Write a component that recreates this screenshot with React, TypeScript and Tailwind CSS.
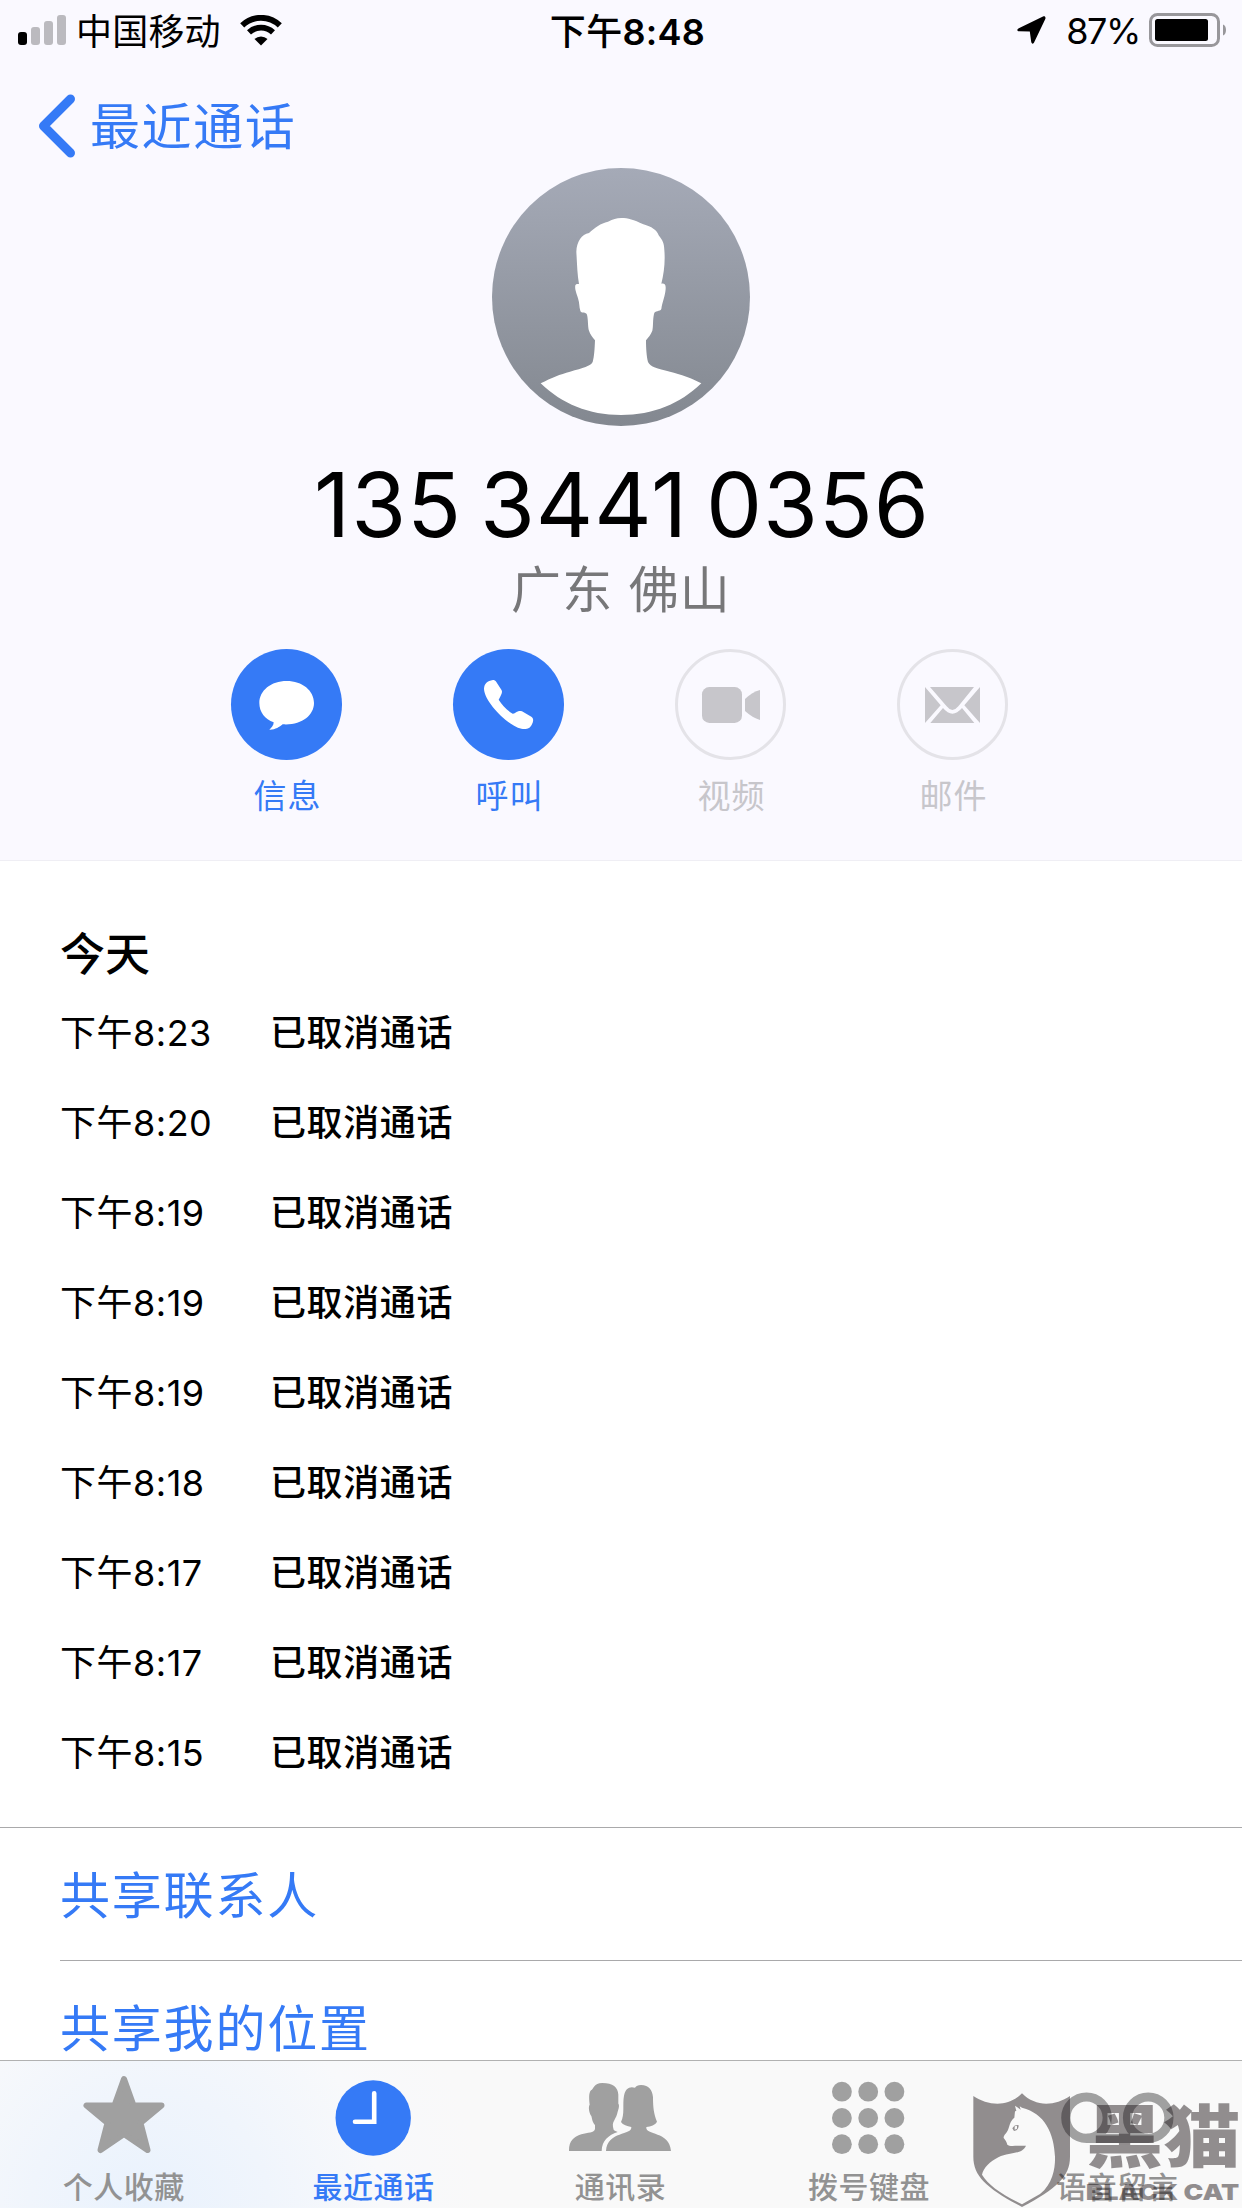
import type { ReactNode } from 'react';

const calls = ['8:23', '8:20', '8:19', '8:19', '8:19', '8:18', '8:17', '8:17', '8:15'];

function StatusBar() {
  return (
    <div className="flex h-[60px] items-center text-[36px] leading-[60px] text-black">
      <div className="flex flex-1 items-center pl-[18px]">
        <svg width="48" height="30" viewBox="0 0 48 30">
          <rect x="0" y="17" width="9" height="13" rx="3" fill="#000" />
          <rect x="13" y="12" width="9" height="18" rx="3" fill="#bbbabf" />
          <rect x="26" y="6" width="9" height="24" rx="3" fill="#bbbabf" />
          <rect x="39" y="0" width="9" height="30" rx="3" fill="#bbbabf" />
        </svg>
        <span className="ml-[10px] mt-[3px] tracking-[0.2px]">中国移动</span>
        <svg className="ml-[19px]" width="42" height="31" viewBox="0 0 42 31">
          <path d="M2.2 10.4A27 27 0 0 1 39.8 10.4" fill="none" stroke="#000" strokeWidth="5.8" />
          <path d="M9 17.4A17.5 17.5 0 0 1 33 17.4" fill="none" stroke="#000" strokeWidth="5.8" />
          <path d="M14.5 24A9.5 9.5 0 0 1 27.5 24L21 30.5Z" fill="#000" />
        </svg>
      </div>
      <div className="ml-[10px] mt-[3px] font-medium tracking-[0.3px]">下午<span className="font-semibold">8:48</span></div>
      <div className="flex flex-1 items-center justify-end pr-[15px]">
        <svg width="29" height="28" viewBox="0 0 29 28">
          <path d="M26 .5 1.8 12.2C-.4 13.4 0 15.2 2.2 15.3L12.8 15.6 14.2 25.8C14.6 28.2 16.4 28.2 17.3 26L28.3 3C29 1 27.8-.2 26 .5Z" fill="#000" />
        </svg>
        <span className="ml-[20px] mt-[2px] tracking-[-1.4px]">87%</span>
        <svg className="ml-[9px]" width="78" height="34" viewBox="0 0 78 34">
          <rect x="1.5" y="1.5" width="68" height="31" rx="7" fill="none" stroke="#98979b" strokeWidth="3" />
          <rect x="6" y="6" width="53" height="22" rx="2.5" fill="#000" />
          <path d="M74 11.5c4 1 4 10 0 11Z" fill="#98979b" />
        </svg>
      </div>
    </div>
  );
}

function Avatar() {
  return (
    <svg width="258" height="258" viewBox="36 24 774 774">
      <defs>
        <linearGradient id="avatar" x1="0" y1="0" x2="0" y2="1">
          <stop offset="0" stopColor="#a5aab7" />
          <stop offset="1" stopColor="#838890" />
        </linearGradient>
      </defs>
      <circle cx="423" cy="411" r="387" fill="url(#avatar)" />
      <path
        d="M424 174C445 174 460 179 490 193C515 200 530 210 536 226C549 243 552 250 553 270C556 305 552 340 544 371C556 369 559 376 556 395C553 415 547 425 544 447C540 456 524 450 522 462C518 480 520 500 517 512C512 525 506 531 498 541C498 565 500 590 504 606C512 621 530 625 570 635C600 642 640 656 664 670C600 732 520 765 423 765C326 765 246 732 182 670C215 653 240 643 270 635C310 624 332 618 338 606C343 590 344 565 345 541C337 531 331 524 327 512C323 500 325 480 321 464C319 454 303 461 301 452C297 440 299 430 294 415C288 395 284 388 286 376C288 371 292 372 297 372C292 345 291 310 289 275C290 245 305 222 327 219C345 202 362 190 384 185C400 178 408 174 424 174Z"
        fill="#fff"
      />
    </svg>
  );
}

function Action({ label, active, children }: { label: string; active?: boolean; children: ReactNode }) {
  return (
    <div className="flex w-[222px] flex-col items-center">
      <div
        className={
          active
            ? 'h-[111px] w-[111px] rounded-full bg-[#357af6]'
            : 'h-[111px] w-[111px] rounded-full border-[3px] border-[#e4e3e8]'
        }
      >
        <svg className={active ? '' : '-m-[3px]'} width="111" height="111" viewBox="0 0 333 333">{children}</svg>
      </div>
      <span
        className={
          active
            ? 'mt-[12px] pl-[3px] text-[33px] leading-[48px] tracking-[1px] text-[#357af6]'
            : 'mt-[12px] pl-[3px] text-[33px] leading-[48px] tracking-[1px] text-[#c7c6cb]'
        }
      >
        {label}
      </span>
    </div>
  );
}

function Tab({ label, active, children }: { label: string; active?: boolean; children: ReactNode }) {
  return (
    <div className="flex flex-1 flex-col items-center">
      <svg width="120" height="86" viewBox="0 0 120 86" className="mt-[11px] shrink-0">{children}</svg>
      <span
        className={
          active
            ? 'mt-[7px] shrink-0 pl-[2px] text-[30px] font-medium leading-[44px] tracking-[0.5px] text-[#357af6]'
            : 'mt-[7px] shrink-0 pr-[1px] text-[30px] font-medium leading-[44px] tracking-[0.5px] text-[#929292]'
        }
      >
        {label}
      </span>
    </div>
  );
}

function Watermark() {
  return (
    <svg className="absolute bottom-0 right-0 opacity-[0.46]" width="292" height="158" viewBox="0 0 876 474" fill="#181013">
      <path
        fillRule="evenodd"
        d="M70 138C115 168 175 172 216 130C257 172 315 168 360 138V320C360 380 320 415 216 471C112 415 70 380 70 320ZM193 203C180 213 180 225 174 240C168 252 160 256 161 264C166 270 170 276 172 284C178 290 190 287 228 287C215 315 180 305 145 322C120 334 100 355 96 374C115 405 150 430 216 463L270 432C310 400 316 350 315 320C312 250 285 190 216 173L209 169L212 179L195 167L199 183L195 184Z"
      />
      <path fillRule="evenodd" d="M187 235Q195 221 206 226Q206 241 192 243ZM194 229V239L201 236V227Z" />
      <text x="408" y="350" fontSize="232" fontWeight="900" textLength="464" lengthAdjust="spacingAndGlyphs" transform="translate(0 28) scale(1 .88)">
        黑猫
      </text>
      <text x="407" y="450" fontSize="66" fontWeight="900" textLength="461" lengthAdjust="spacingAndGlyphs">
        BLACK CAT
      </text>
    </svg>
  );
}

export default function App() {
  return (
    <div className="relative flex h-[2208px] w-[1242px] flex-col overflow-hidden bg-white font-['Inter','Noto_Sans_CJK_SC',sans-serif]">
      <header className="flex h-[861px] shrink-0 flex-col border-b border-[#efeef4] bg-[#faf9ff]">
        <StatusBar />
        <div className="flex h-[108px] items-center pl-[38px] text-[#357af6]">
          <svg className="mt-[24px]" width="38" height="64" viewBox="0 0 38 64">
            <path d="M32.5 5 5.5 32 32.5 59" fill="none" stroke="currentColor" strokeWidth="9" strokeLinecap="round" strokeLinejoin="round" />
          </svg>
          <span className="ml-[14px] mt-[26px] text-[50px] leading-[72px] tracking-[1.6px]">最近通话</span>
        </div>
        <div className="flex flex-col items-center">
          <Avatar />
          <h1 className="mt-[23px] pl-[2px] text-[89px] leading-[112px] tracking-[0.9px] text-black [word-spacing:-8px]">135 3441 0356</h1>
          <p className="-mt-[4px] text-[50px] leading-[66px] tracking-[1.2px] text-[#777779]">广东 佛山</p>
        </div>
        <div className="mt-[26px] flex pl-[175px]">
          <Action label="信息" active>
            <path d="M167 96C214 96 249 125 249 162C249 200 210 230 155 226C145 234 132 243 115 242C122 236 128 229 128 220C102 210 85 190 85 162C85 125 120 96 167 96Z" fill="#fff" />
          </Action>
          <Action label="呼叫" active>
            <path d="M120 93C125 92 128 96 130 99L145 122C150 129 145 137 137 152C147 167 161 184 179 194C188 195 192 183 207 187L235 203C243 208 241 218 237 226C231 239 222 241 210 240C172 237 95 162 93 120C94 103 103 96 120 93Z" fill="#fff" />
          </Action>
          <Action label="视频">
            <rect x="81" y="114" width="120" height="108" rx="22" fill="#c7c6cb" />
            <path d="M210 150Q232 129 255 123V213Q232 206 210 186Z" fill="#c7c6cb" />
          </Action>
          <Action label="邮件">
            <path d="M99 114H231L184 172Q166 194 149 172ZM84 114 131 169 84 222ZM249 114 202 169 249 222ZM138 177Q166 211 195 177L232 222H100Z" fill="#c7c6cb" />
          </Action>
        </div>
      </header>

      <main className="flex-1 text-black">
        <section className="h-[966px] pl-[60px] pt-[61px]">
          <h2 className="text-[45px] font-medium leading-[66px]">今天</h2>
          {calls.map((time, i) => (
            <div key={i} className="flex h-[90px] items-center text-[36px]">
              <span className="w-[210px] tracking-[0.5px]">下午{time}</span>
              <span className="font-medium tracking-[0.6px]">已取消通话</span>
            </div>
          ))}
        </section>
        <div className="border-t border-[#a9a9ab] pl-[60px] text-[50px] tracking-[1.8px] text-[#357af6]">
          <div className="flex h-[132px] items-center pt-[4px]">共享联系人</div>
          <div className="flex h-[133px] items-center border-t border-[#a9a9ab] pt-[4px]">共享我的位置</div>
        </div>
      </main>

      <nav className="absolute inset-x-0 bottom-0 flex h-[148px] border-t border-[#b1b1b1] bg-[#f9f9f9] bg-[radial-gradient(circle_at_150px_150px,#e9f2fd_0,#f0f5fc_120px,#f8f9fb_230px,#f9f9f9_330px)]">
        <Tab label="个人收藏">
          <path d="M60 7 69.5 33.5H97.5L76.5 51 83.5 78 60 62 36.5 78 43.5 51 22.5 33.5H50.5Z" fill="#a0a0a0" stroke="#a0a0a0" strokeWidth="6" strokeLinejoin="round" />
        </Tab>
        <Tab label="最近通话" active>
          <circle cx="60.2" cy="46" r="37.7" fill="#357af6" />
          <path d="M61.2 21.2V49.7H42" fill="none" stroke="#fff" strokeWidth="4.6" strokeLinecap="round" />
        </Tab>
        <Tab label="通讯录">
          <g transform="translate(8 11) scale(.3333)" fill="#a0a0a0">
            <path d="M100 0C132 0 147 13 148 35V62C152 66 149 78 146 86C144 98 140 103 136 112C131 120 130 127 134 140C136 143 142 145 146 147C118 157 99 172 98 204H0C0 173 14 162 37 154C56 148 76 150 78 138V126C70 117 70 110 67 99C61 91 57 72 62 65C60 45 59 30 66 22C74 19 74 0 100 0Z" />
            <path d="M216 6C240 6 250 22 252 42C252 75 255 94 264 116C258 127 246 130 232 132C228 158 302 143 306 204H111C115 143 190 158 187 132C174 130 162 126 156 117C168 92 160 65 165 38C169 16 182 9 198 14C202 9 207 6 216 6Z" />
          </g>
        </Tab>
        <Tab label="拨号键盘">
          {[19.7, 46, 72.2].map((y) =>
            [32.9, 59.2, 85.4].map((x) => <circle key={`${x}-${y}`} cx={x} cy={y} r="9.9" fill="#a0a0a0" />)
          )}
        </Tab>
        <Tab label="语音留言">
          <g fill="none" stroke="#a0a0a0" strokeWidth="9.2">
            <circle cx="28.5" cy="45.7" r="20.7" />
            <circle cx="90.2" cy="45.7" r="20.7" />
            <path d="M28.5 66.4H90.2" />
          </g>
        </Tab>
      </nav>
      <Watermark />
    </div>
  );
}
